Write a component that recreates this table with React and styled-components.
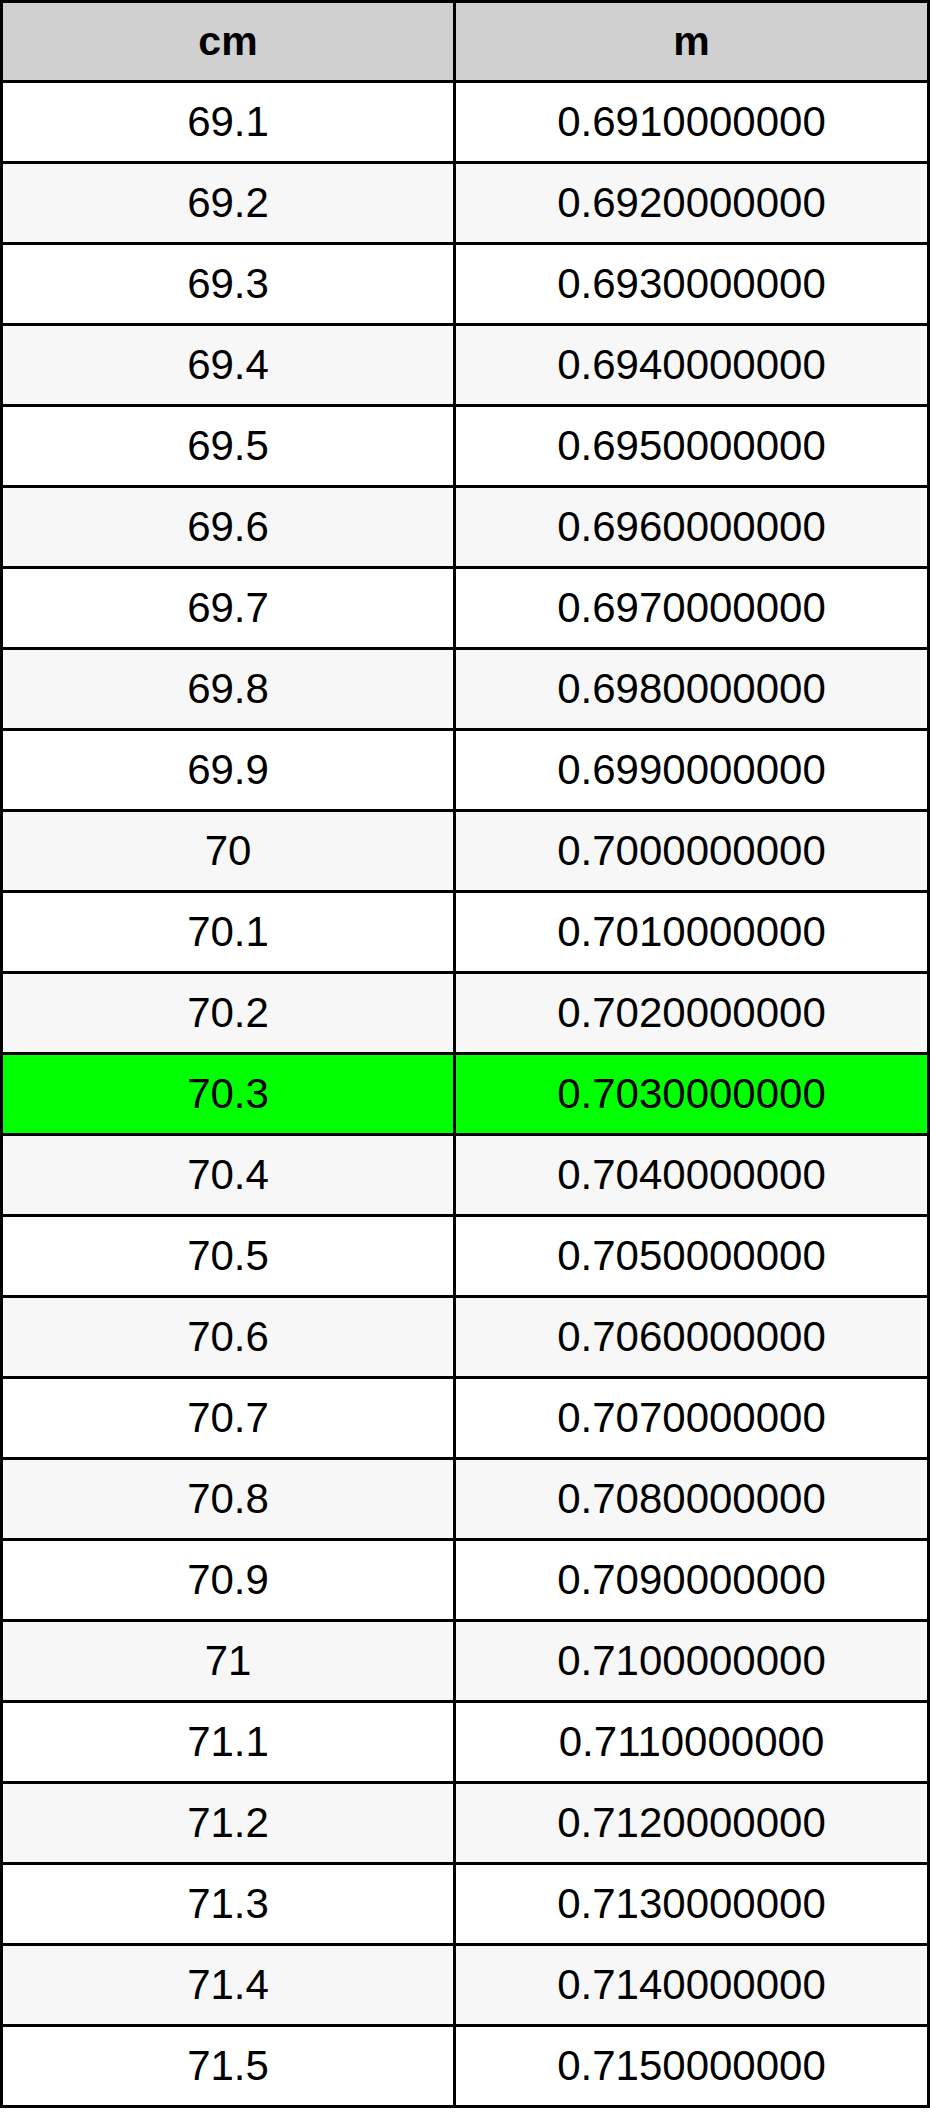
import styled, { createGlobalStyle } from 'styled-components';

const GlobalStyle = createGlobalStyle`
  html, body {
    margin: 0;
    padding: 0;
    background: #fff;
  }
`

const Table = styled.table`
  border-collapse: separate;
  border-spacing: 3px;
  background-color: #000;
  font-family: "Liberation Sans", Arial, sans-serif;
  font-size: 42px;
  color: #000;
`

const HeadCell = styled.th`
  width: ${({ wide }) => (wide ? '471px' : '450px')};
  height: 77px;
  padding: 0;
  background-color: #d0d0d0;
  font-size: 41px;
  font-weight: bold;
  text-align: center;
  vertical-align: middle;
`

const Cell = styled.td`
  height: 78px;
  padding: 0;
  text-align: center;
  vertical-align: middle;
  background-color: ${({ active, even }) => (active ? '#00ff00' : even ? '#f7f7f7' : '#fff')};
`

const rows = Array.from({ length: 25 }, (_, i) => {
  const cm = (691 + i) / 10;
  return { cm: String(cm), m: (cm / 100).toFixed(10) };
});

export default function App() {
  return (
    <>
      <GlobalStyle />
      <Table>
        <thead>
          <tr>
            <HeadCell>cm</HeadCell>
            <HeadCell wide>m</HeadCell>
          </tr>
        </thead>
        <tbody>
          {rows.map((row, i) => (
            <tr key={row.cm}>
              <Cell even={i % 2 === 1} active={row.cm === '70.3'}>{row.cm}</Cell>
              <Cell even={i % 2 === 1} active={row.cm === '70.3'}>{row.m}</Cell>
            </tr>
          ))}
        </tbody>
      </Table>
    </>
  );
}
